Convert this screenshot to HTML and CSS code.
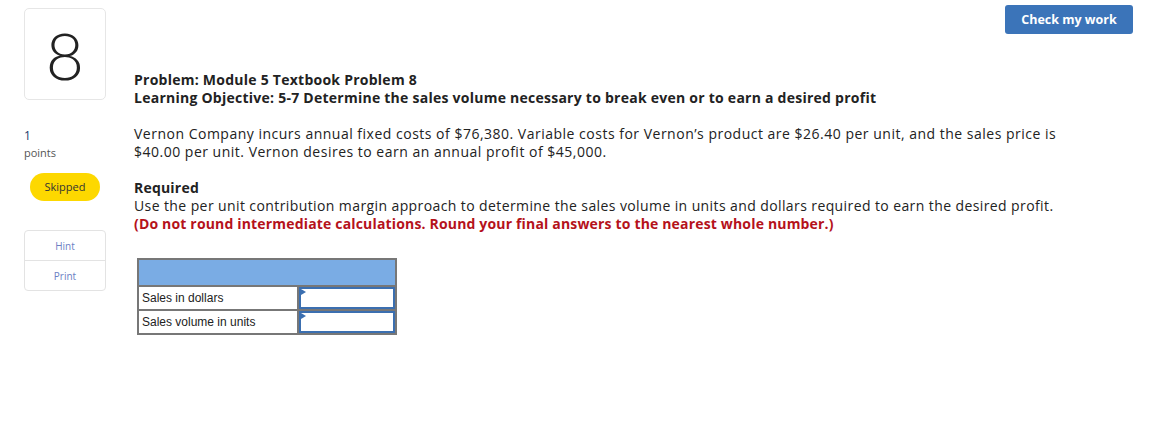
FILE: index.html
```html
<!DOCTYPE html>
<html lang="en">
<head>
    <meta charset="UTF-8">
    <title>Module 5 Textbook Problem 8</title>
    <link rel="stylesheet" href="styles.css">
</head>
<body>

<div class="page">
    <div class="side">
        <div class="qnum">8</div>
        <div class="points">
            <div>1</div>
            <div>points</div>
        </div>
        <div class="status">Skipped</div>
        <div class="tools">
            <div class="tool">Hint</div>
            <div class="tool">Print</div>
        </div>
    </div>

    <div class="main">
        <div class="topbar">
            <button class="check">Check my work</button>
        </div>

        <div class="title">
            Problem: Module 5 Textbook Problem 8<br>
            Learning Objective: 5-7 Determine the sales volume necessary to break even or to earn a desired profit
        </div>

        <p class="text">Vernon Company incurs annual fixed costs of $76,380. Variable costs for Vernon’s product are $26.40 per unit, and the sales price is<br>$40.00 per unit. Vernon desires to earn an annual profit of $45,000.</p>

        <div class="req">
            <b>Required</b><br>
            Use the per unit contribution margin approach to determine the sales volume in units and dollars required to earn the desired profit.<br>
            <span class="warn">(Do not round intermediate calculations. Round your final answers to the nearest whole number.)</span>
        </div>

        <table class="answer">
            <tr><th colspan="2"></th></tr>
            <tr>
                <td class="lbl">Sales in dollars</td>
                <td class="cell"><div class="inp"></div></td>
            </tr>
            <tr>
                <td class="lbl">Sales volume in units</td>
                <td class="cell"><div class="inp"></div></td>
            </tr>
        </table>
    </div>
</div>

</body>
</html>
```

FILE: styles.css
```css
body {
    margin: 0;
    font-family: "Open Sans", Lato, sans-serif;
    color: #222;
    background: #fff;
}
.page {
    display: flex;
    padding-left: 24px;
}
.side {
    width: 82px;
    padding-top: 8px;
    display: flex;
    flex-direction: column;
}
.qnum {
    height: 90px;
    border: 1px solid #e6e6e6;
    border-radius: 5px;
    display: flex;
    align-items: center;
    justify-content: center;
    font-family: Lato, sans-serif;
    font-size: 66px;
    font-weight: 300;
    color: #222;
}
.points {
    margin-top: 27px;
    font-size: 11px;
    line-height: 17px;
    color: #555;
}
.points div:first-child {
    color: #1b3a6b;
    font-size: 12px;
}
.status {
    margin: 12px 0 0 6px;
    width: 70px;
    height: 28px;
    border-radius: 14px;
    background: #fdd800;
    font-size: 11px;
    line-height: 28px;
    text-align: center;
    color: #333;
}
.tools {
    margin-top: 29px;
    border: 1px solid #e3e3e3;
    border-radius: 4px;
}
.tool {
    height: 29px;
    line-height: 30px;
    text-align: center;
    font-size: 10px;
    color: #6c7fc4;
}
.tool + .tool {
    border-top: 1px solid #e3e3e3;
}
.main {
    flex: 1;
    margin-left: 28px;
    padding-right: 43px;
}
.topbar {
    display: flex;
    justify-content: flex-end;
    padding-top: 5px;
}
.check {
    width: 128px;
    height: 29px;
    background: #3b74b9;
    color: #fff;
    border: none;
    border-radius: 3px;
    font-family: inherit;
    font-weight: bold;
    font-size: 12.5px;
}
.title {
    margin-top: 37px;
    font-size: 14px;
    font-weight: bold;
    line-height: 18px;
    letter-spacing: 0.25px;
}
.text {
    margin: 18px 0 0;
    font-size: 14px;
    line-height: 18px;
    letter-spacing: 0.5px;
    white-space: nowrap;
}
.req {
    margin-top: 18px;
    font-size: 14px;
    line-height: 18px;
    letter-spacing: 0.4px;
}
.req b {
    letter-spacing: 0.2px;
}
.warn {
    color: #b5121b;
    font-weight: bold;
    letter-spacing: 0.17px;
}
.answer {
    margin: 25px 0 0 3px;
    border-collapse: collapse;
    font-family: Arial, "Liberation Sans", sans-serif;
    font-size: 12px;
}
.answer th {
    height: 23px;
    background: #7aace4;
    border: 2px solid #777;
}
.answer td {
    border: 2px solid #777;
    height: 20px;
    padding: 0;
}
.lbl {
    width: 155px;
    padding-left: 3px !important;
}
.cell {
    width: 96px;
}
.inp {
    position: relative;
    height: 18px;
    border: 2px solid #3b6fb0;
}
.inp::before {
    content: "";
    position: absolute;
    top: 0;
    left: 0;
    border-left: 5px solid #3b6fb0;
    border-top: 3px solid transparent;
    border-bottom: 3px solid transparent;
}
```
